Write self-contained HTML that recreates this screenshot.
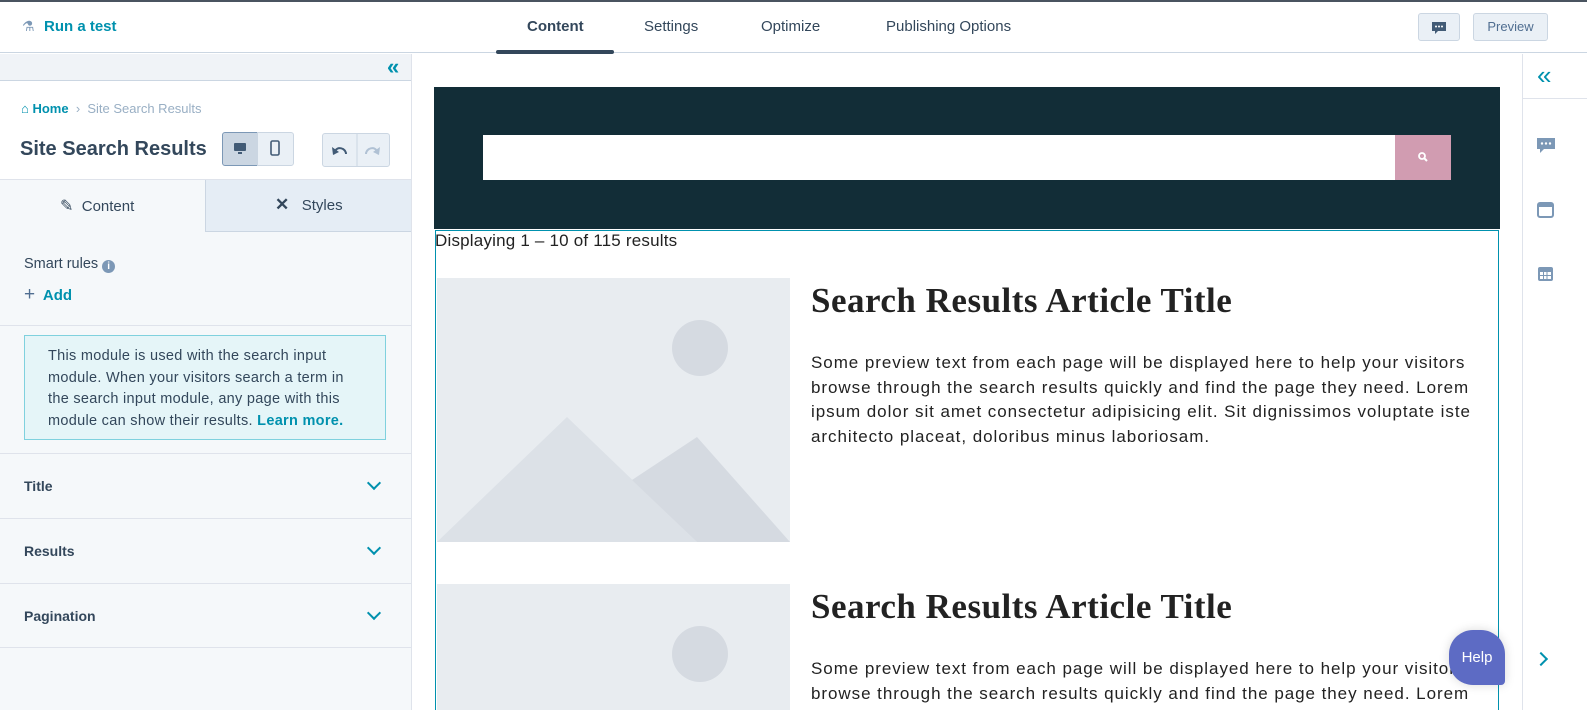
<!DOCTYPE html>
<html><head><style>
*{box-sizing:border-box;margin:0;padding:0}
body{width:1587px;height:710px;overflow:hidden;font-family:"Liberation Sans",sans-serif;background:#fff;position:relative;color:#33475b}
.abs{position:absolute}
.topline{left:0;top:0;width:1587px;height:2px;background:#4a5460}
.top{left:0;top:2px;width:1587px;height:51px;border-bottom:1px solid #cbd6e2;background:#fff}
.tab{top:18px;font-size:15px;color:#33475b}
.btn{background:#eaf0f6;border:1px solid #cbd6e2;border-radius:3px}
.left{left:0;top:54px;width:412px;height:656px;background:#f5f8fa;border-right:1px solid #dfe3eb}
.sec{position:absolute;left:0;width:411px;border-top:1px solid #dfe3eb;font-weight:bold;font-size:14px;padding-left:24px}
.chev{position:absolute;right:32px;top:24px;width:10px;height:10px;border-right:2px solid #0091ae;border-bottom:2px solid #0091ae;transform:rotate(45deg)}
.serif{font-family:"Liberation Serif",serif;font-weight:bold;font-size:35px;color:#222;letter-spacing:0.5px}
.body{font-size:17px;line-height:24.5px;color:#222;letter-spacing:0.95px}
</style></head><body>
<div class="abs topline"></div>
<div class="abs top"></div>
<div class="abs" style="left:22px;top:19px;width:12px;height:14px;color:#7c98b6;font-size:14px;line-height:14px">⚗</div>
<div class="abs" style="left:44px;top:18px;font-size:15px;font-weight:bold;color:#0091ae">Run a test</div>
<div class="abs tab" style="left:527px;font-weight:bold">Content</div>
<div class="abs" style="left:496px;top:50px;width:118px;height:4px;background:#33475b;border-radius:2px"></div>
<div class="abs tab" style="left:644px">Settings</div>
<div class="abs tab" style="left:761px">Optimize</div>
<div class="abs tab" style="left:886px">Publishing Options</div>
<div class="abs btn" style="left:1418px;top:13px;width:42px;height:28px"><svg width="40" height="26"><path d="M13 8h14v9h-8l-3 3v-3h-3z" fill="#425b76"/><circle cx="17" cy="12.5" r="1" fill="#fff"/><circle cx="20" cy="12.5" r="1" fill="#fff"/><circle cx="23" cy="12.5" r="1" fill="#fff"/></svg></div>
<div class="abs btn" style="left:1473px;top:13px;width:75px;height:28px;font-size:13px;color:#506e91;text-align:center;line-height:26px">Preview</div>

<div class="abs left"></div>
<div class="abs" style="left:0;top:54px;width:411px;height:27px;background:#f0f3f7;border-bottom:1px solid #cbd6e2"></div>
<div class="abs" style="left:387px;top:56px;color:#0091ae;font-size:22px;line-height:22px;font-weight:bold">«</div>
<div class="abs" style="left:0;top:81px;width:411px;height:98px;background:#fff"></div>
<div class="abs" style="left:21px;top:101px;font-size:13px;color:#0091ae;font-weight:bold">⌂ Home <span style="color:#99afc4;font-weight:normal">&nbsp;›&nbsp; Site Search Results</span></div>
<div class="abs" style="left:20px;top:138px;font-size:20px;font-weight:bold;color:#33475b">Site Search Results</div>
<div class="abs" style="left:222px;top:132px;width:36px;height:34px;background:#cbd6e2;border:1px solid #7c98b6;border-radius:3px 0 0 3px"><svg width="34" height="32"><rect x="11" y="10" width="12" height="8" rx="1" fill="#425b76"/><rect x="15" y="19" width="4" height="2" fill="#425b76"/></svg></div>
<div class="abs btn" style="left:257px;top:132px;width:37px;height:34px;border-radius:0 3px 3px 0"><svg width="34" height="32"><rect x="13" y="8" width="8" height="14" rx="1.5" fill="none" stroke="#425b76" stroke-width="1.6"/></svg></div>
<div class="abs btn" style="left:322px;top:133px;width:68px;height:34px"><svg width="66" height="32"><path d="M11 20q2-8 9-5 3 2 3 5" fill="none" stroke="#425b76" stroke-width="2"/><path d="M9 13l1 8 6-3z" fill="#425b76"/><line x1="34" y1="0" x2="34" y2="32" stroke="#cbd6e2"/><path d="M55 20q-2-8-9-5-3 2-3 5" fill="none" stroke="#b0c1d4" stroke-width="2"/><path d="M57 13l-1 8-6-3z" fill="#b0c1d4"/></svg></div>
<div class="abs" style="left:0;top:179px;width:411px;height:1px;background:#dfe3eb"></div>
<div class="abs" style="left:205px;top:180px;width:206px;height:52px;background:#e5edf5;border-left:1px solid #cbd6e2;border-bottom:1px solid #cbd6e2"></div>
<div class="abs" style="left:60px;top:196px;font-size:15px"><span style="font-size:16px">✎</span>&nbsp; Content</div>
<div class="abs" style="left:275px;top:195px;font-size:15px"><span style="font-size:17px;font-weight:bold">✕</span>&nbsp;&nbsp; Styles</div>
<div class="abs" style="left:24px;top:256px;font-size:14.5px">Smart rules <span style="display:inline-block;width:13px;height:13px;border-radius:50%;background:#7c98b6;color:#fff;font-size:10px;text-align:center;line-height:13px;font-weight:bold;vertical-align:-1px">i</span></div>
<div class="abs" style="left:24px;top:284px;font-size:15px;font-weight:bold;color:#0091ae"><span style="font-weight:normal;color:#506e91;font-size:19px">+</span>&nbsp; Add</div>
<div class="abs" style="left:0;top:325px;width:411px;height:1px;background:#dfe3eb"></div>
<div class="abs" style="left:24px;top:335px;width:362px;height:105px;background:#e5f5f8;border:1px solid #7fd1de;padding:10px 20px 0 23px;font-size:14.5px;line-height:21.7px;letter-spacing:0.3px">This module is used with the search input module. When your visitors search a term in the search input module, any page with this module can show their results. <b style="color:#0091ae">Learn more.</b></div>
<div class="sec" style="top:453px;height:65px;line-height:64px">Title<div class="chev"></div></div>
<div class="sec" style="top:518px;height:65px;line-height:64px">Results<div class="chev"></div></div>
<div class="sec" style="top:583px;height:65px;line-height:64px;border-bottom:1px solid #dfe3eb">Pagination<div class="chev"></div></div>

<div class="abs" style="left:434px;top:87px;width:1066px;height:142px;background:#122d37"></div>
<div class="abs" style="left:483px;top:135px;width:912px;height:45px;background:#fff"></div>
<div class="abs" style="left:1395px;top:135px;width:56px;height:45px;background:#d19cb1"><svg width="56" height="45"><circle cx="27" cy="21" r="3" fill="none" stroke="#fff" stroke-width="1.8"/><line x1="29" y1="23" x2="32" y2="26" stroke="#fff" stroke-width="2"/></svg></div>
<div class="abs" style="left:435px;top:230px;width:1064px;height:480px;border:1px solid #0091ae;border-bottom:none"></div>
<div class="abs" style="left:435px;top:231px;font-size:17px;color:#222;letter-spacing:0.2px">Displaying 1 – 10 of 115 results</div>

<svg class="abs" style="left:437px;top:278px" width="353" height="264"><rect width="353" height="264" fill="#e8ecf0"/><circle cx="263" cy="70" r="28" fill="#d5dae1"/><path d="M0 264L130 139 260 264z" fill="#dce1e7"/><path d="M195 202L260 159 353 264 260 264z" fill="#d5dae1"/></svg>
<div class="abs serif" style="left:811px;top:281px">Search Results Article Title</div>
<div class="abs body" style="left:811px;top:351px;width:690px">Some preview text from each page will be displayed here to help your visitors browse through the search results quickly and find the page they need. Lorem ipsum dolor sit amet consectetur adipisicing elit. Sit dignissimos voluptate iste architecto placeat, doloribus minus laboriosam.</div>
<svg class="abs" style="left:437px;top:584px" width="353" height="126"><rect width="353" height="126" fill="#e8ecf0"/><circle cx="263" cy="70" r="28" fill="#d5dae1"/></svg>
<div class="abs serif" style="left:811px;top:587px">Search Results Article Title</div>
<div class="abs body" style="left:811px;top:657px;width:690px;height:53px;overflow:hidden">Some preview text from each page will be displayed here to help your visitors browse through the search results quickly and find the page they need. Lorem</div>

<div class="abs" style="left:1522px;top:54px;width:65px;height:656px;background:#fff;border-left:1px solid #dfe3eb"></div>
<div class="abs" style="left:1523px;top:98px;width:64px;height:1px;background:#dfe3eb"></div>
<div class="abs" style="left:1537px;top:63px;color:#0091ae;font-size:26px;line-height:24px">«</div>
<svg class="abs" style="left:1536px;top:136px" width="20" height="20"><path d="M1 2h18v11h-11l-4 4v-4h-3z" fill="#7c98b6"/><circle cx="6" cy="7.5" r="1.2" fill="#fff"/><circle cx="10" cy="7.5" r="1.2" fill="#fff"/><circle cx="14" cy="7.5" r="1.2" fill="#fff"/></svg>
<svg class="abs" style="left:1536px;top:200px" width="20" height="20"><rect x="2" y="3" width="15" height="14" rx="2" fill="none" stroke="#7c98b6" stroke-width="2"/><rect x="2" y="3" width="15" height="4" fill="#7c98b6"/></svg>
<svg class="abs" style="left:1536px;top:263px" width="20" height="20"><rect x="2" y="4" width="15" height="14" rx="2" fill="#7c98b6"/><rect x="4" y="9" width="11" height="7" fill="#fff"/><path d="M4 12.5h11M7.5 9v7M11 9v7" stroke="#7c98b6"/></svg>
<div class="abs" style="left:1536px;top:654px;width:10px;height:10px;border-right:2px solid #0091ae;border-top:2px solid #0091ae;transform:rotate(45deg)"></div>
<div class="abs" style="left:1449px;top:630px;width:56px;height:55px;background:#5d6bc4;border-radius:24px 24px 4px 24px;color:#fff;font-size:15px;text-align:center;line-height:56px;box-shadow:0 0 10px rgba(0,0,0,.15)">Help</div>
</body></html>
